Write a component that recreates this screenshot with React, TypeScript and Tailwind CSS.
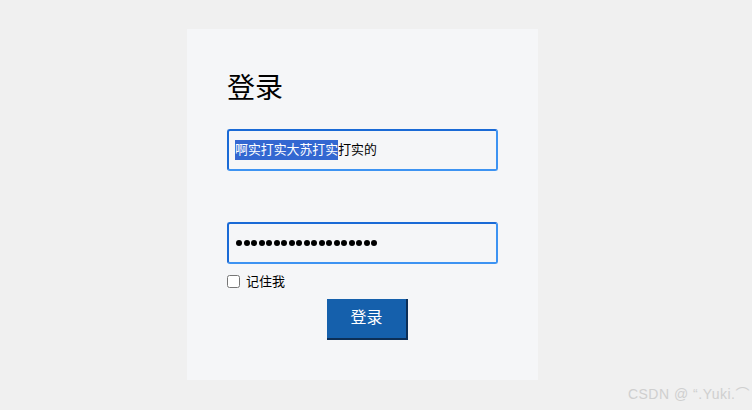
const font = { fontFamily: '"Liberation Sans", "Noto Sans CJK SC", sans-serif' };

const dots = Array.from({ length: 19 });

export default function App() {
  return (
    <div className="relative w-[752px] h-[410px] bg-[#f0f0f0] overflow-hidden" style={font}>
      <div className="ml-[187px] mt-[29px] w-[351px] h-[351px] bg-[#f5f6f8] px-10 pt-[40px]">
        <h1 className="text-[28px] leading-[40px] text-black">登录</h1>
        <div className="mt-[20px] w-[271px] h-[42px] rounded-[3px] border-2 border-[#1a6ad6] border-b-[#3d93f2] border-r-[#3d93f2] bg-[#f5f6f8] flex items-center pl-[6px] text-[12.9px] text-black">
          <span className="bg-[#3367d1] text-white">啊实打实大苏打实</span>
          <span>打实的</span>
        </div>
        <div className="mt-[51px] w-[271px] h-[42px] rounded-[3px] border-2 border-[#1a6ad6] border-b-[#3d93f2] border-r-[#3d93f2] bg-[#f5f6f8] flex items-center gap-[1.5px] pl-[7px]">
          {dots.map((_, i) => (
            <span key={i} className="w-[6px] h-[6px] rounded-full bg-black" />
          ))}
        </div>
        <label className="mt-[8px] flex items-center gap-[6px] text-[13px] text-black">
          <input type="checkbox" className="w-[13px] h-[13px] m-0" />
          记住我
        </label>
        <div className="mt-[7px] pl-[100px]">
          <button className="w-[81px] h-[41px] bg-[#1560ac] text-white text-[16px] border-b-2 border-r-2 border-[#0c2f57]">
            登录
          </button>
        </div>
      </div>
      <div className="absolute right-[2px] bottom-[5px] text-[14px] tracking-[0.5px] text-[#cfcfcf]">CSDN @ “.Yuki.⌒</div>
    </div>
  );
}
